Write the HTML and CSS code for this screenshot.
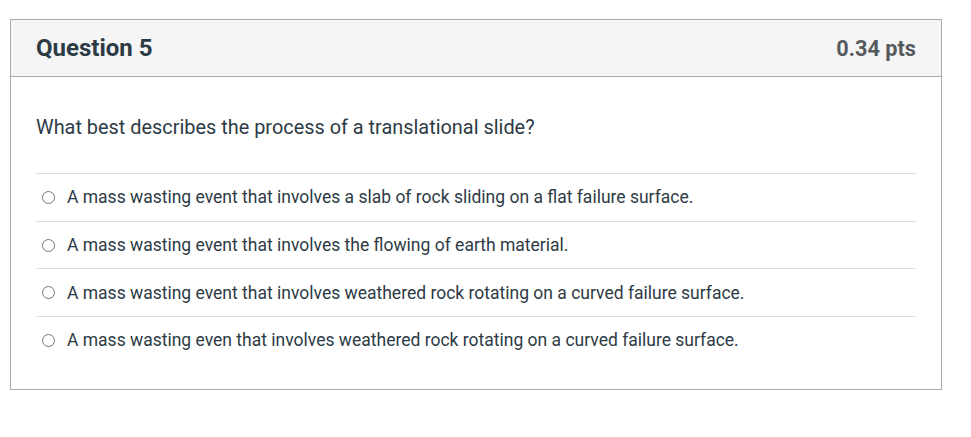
FILE: index.html
```html
<!DOCTYPE html>
<html>
<head>
<meta charset="utf-8">
<link rel="stylesheet" href="styles.css">
</head>
<body>
<div class="question">
  <div class="q-header">
    <h2 class="q-title">Question 5</h2>
    <span class="q-points">0.34 pts</span>
  </div>
  <div class="q-body">
    <p class="q-text">What best describes the process of a translational slide?</p>
    <div class="answers">
      <label class="answer"><span class="radio"></span><span>A mass wasting event that involves a slab of rock sliding on a flat failure surface.</span></label>
      <label class="answer"><span class="radio"></span><span>A mass wasting event that involves the flowing of earth material.</span></label>
      <label class="answer"><span class="radio"></span><span>A mass wasting event that involves weathered rock rotating on a curved failure surface.</span></label>
      <label class="answer"><span class="radio"></span><span>A mass wasting even that involves weathered rock rotating on a curved failure surface.</span></label>
    </div>
  </div>
</div>
</body>
</html>
```
FILE: styles.css
```css
html, body {
  margin: 0;
  padding: 0;
  background: #fff;
}
body {
  padding: 19px 0 0 10px;
  font-family: Roboto, "Liberation Sans", sans-serif;
  color: #2d3b45;
}
.question {
  border: 1px solid #aaaaaa;
  box-sizing: border-box;
  width: 932px;
  height: 371px;
}
.q-header {
  display: flex;
  justify-content: space-between;
  align-items: center;
  height: 56px;
  background: #f5f5f5;
  border-bottom: 1px solid #aaaaaa;
  padding: 0 25px 0 25px;
}
.q-title {
  margin: 0;
  font-size: 24px;
  font-weight: 700;
  color: #2d3b45;
}
.q-points {
  font-size: 21.7px;
  font-weight: 700;
  color: #555a5f;
}
.q-body {
  padding: 38px 25px 0 25px;
}
.q-text {
  margin: 0 0 32px 0;
  font-size: 19.9px;
  line-height: 26px;
}
.answers {
  display: flex;
  flex-direction: column;
}
.answer {
  display: flex;
  align-items: center;
  gap: 12px;
  height: 46.7px;
  border-top: 1px solid #dddddd;
  padding-left: 6px;
  font-size: 17.5px;
  color: #2d3b45;
}
.radio {
  width: 11px;
  height: 11px;
  border: 1px solid #777;
  border-radius: 50%;
  flex: none;
}
```
